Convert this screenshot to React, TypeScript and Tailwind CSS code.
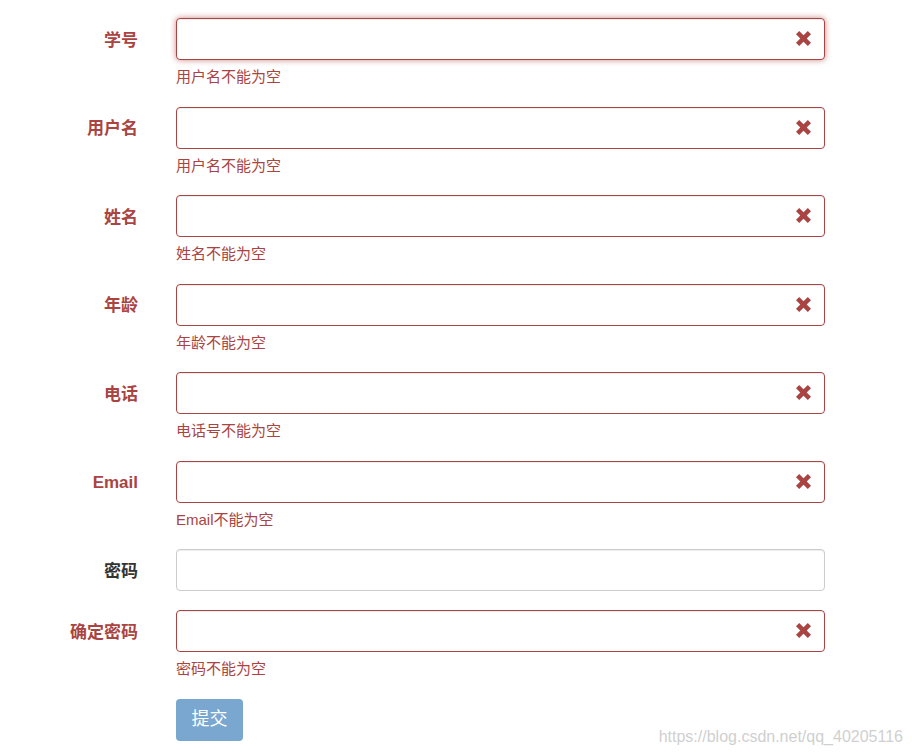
import React from 'react';

type Field = {
  label: string;
  error?: string;
  focused?: boolean;
};

const fields: Field[] = [
  { label: '学号', error: '用户名不能为空', focused: true },
  { label: '用户名', error: '用户名不能为空' },
  { label: '姓名', error: '姓名不能为空' },
  { label: '年龄', error: '年龄不能为空' },
  { label: '电话', error: '电话号不能为空' },
  { label: 'Email', error: 'Email不能为空' },
  { label: '密码' },
  { label: '确定密码', error: '密码不能为空' },
];

function RemoveIcon() {
  return (
    <svg viewBox="0 0 16 16" className="w-[15px] h-[15px]" fill="#a94442">
      <path d="M3.4 0 L8 4.6 L12.6 0 L16 3.4 L11.4 8 L16 12.6 L12.6 16 L8 11.4 L3.4 16 L0 12.6 L4.6 8 L0 3.4 Z" />
    </svg>
  );
}

function FormRow({ field }: { field: Field }) {
  const hasError = !!field.error;
  return (
    <div className="mb-[19px]">
      <div className="flex items-center">
        <label
          className={`w-[138px] pt-[3px] text-right text-[17px] font-bold ${hasError ? 'text-[#a94442]' : 'text-[#333]'}`}
        >
          {field.label}
        </label>
        <div className="relative ml-[38px] w-[649px]">
          <input
            className={`block w-full h-[42px] rounded-[4px] border bg-white px-3 outline-none ${
              hasError ? 'border-[#a94442]' : 'border-[#ccc]'
            } ${field.focused ? 'border-[#843534] shadow-[inset_0_1px_1px_rgba(0,0,0,0.075),0_0_6px_#ce8483]' : 'shadow-[inset_0_1px_1px_rgba(0,0,0,0.075)]'}`}
          />
          {hasError && (
            <span className="absolute right-[14px] top-[13px] flex">
              <RemoveIcon />
            </span>
          )}
        </div>
      </div>
      {hasError && (
        <div className="ml-[176px] mt-[7px] h-[20.5px] text-[15px] leading-[20px] text-[#a94442]">
          {field.error}
        </div>
      )}
    </div>
  );
}

export default function App() {
  return (
    <div
      className="relative w-[912px] h-[754px] bg-white overflow-hidden pt-[18px]"
      style={{ fontFamily: '"Liberation Sans", "Noto Sans CJK SC", sans-serif' }}
    >
      {fields.map((f) => (
        <FormRow key={f.label} field={f} />
      ))}
      <div className="ml-[176px]">
        <button className="h-[42px] w-[67px] rounded-[4px] bg-[#7aa7cf] text-white text-[18px]">
          提交
        </button>
      </div>
      <div className="absolute right-[9px] bottom-[5px] text-[16px] text-[#d0d0d0]">
        https://blog.csdn.net/qq_40205116
      </div>
    </div>
  );
}
